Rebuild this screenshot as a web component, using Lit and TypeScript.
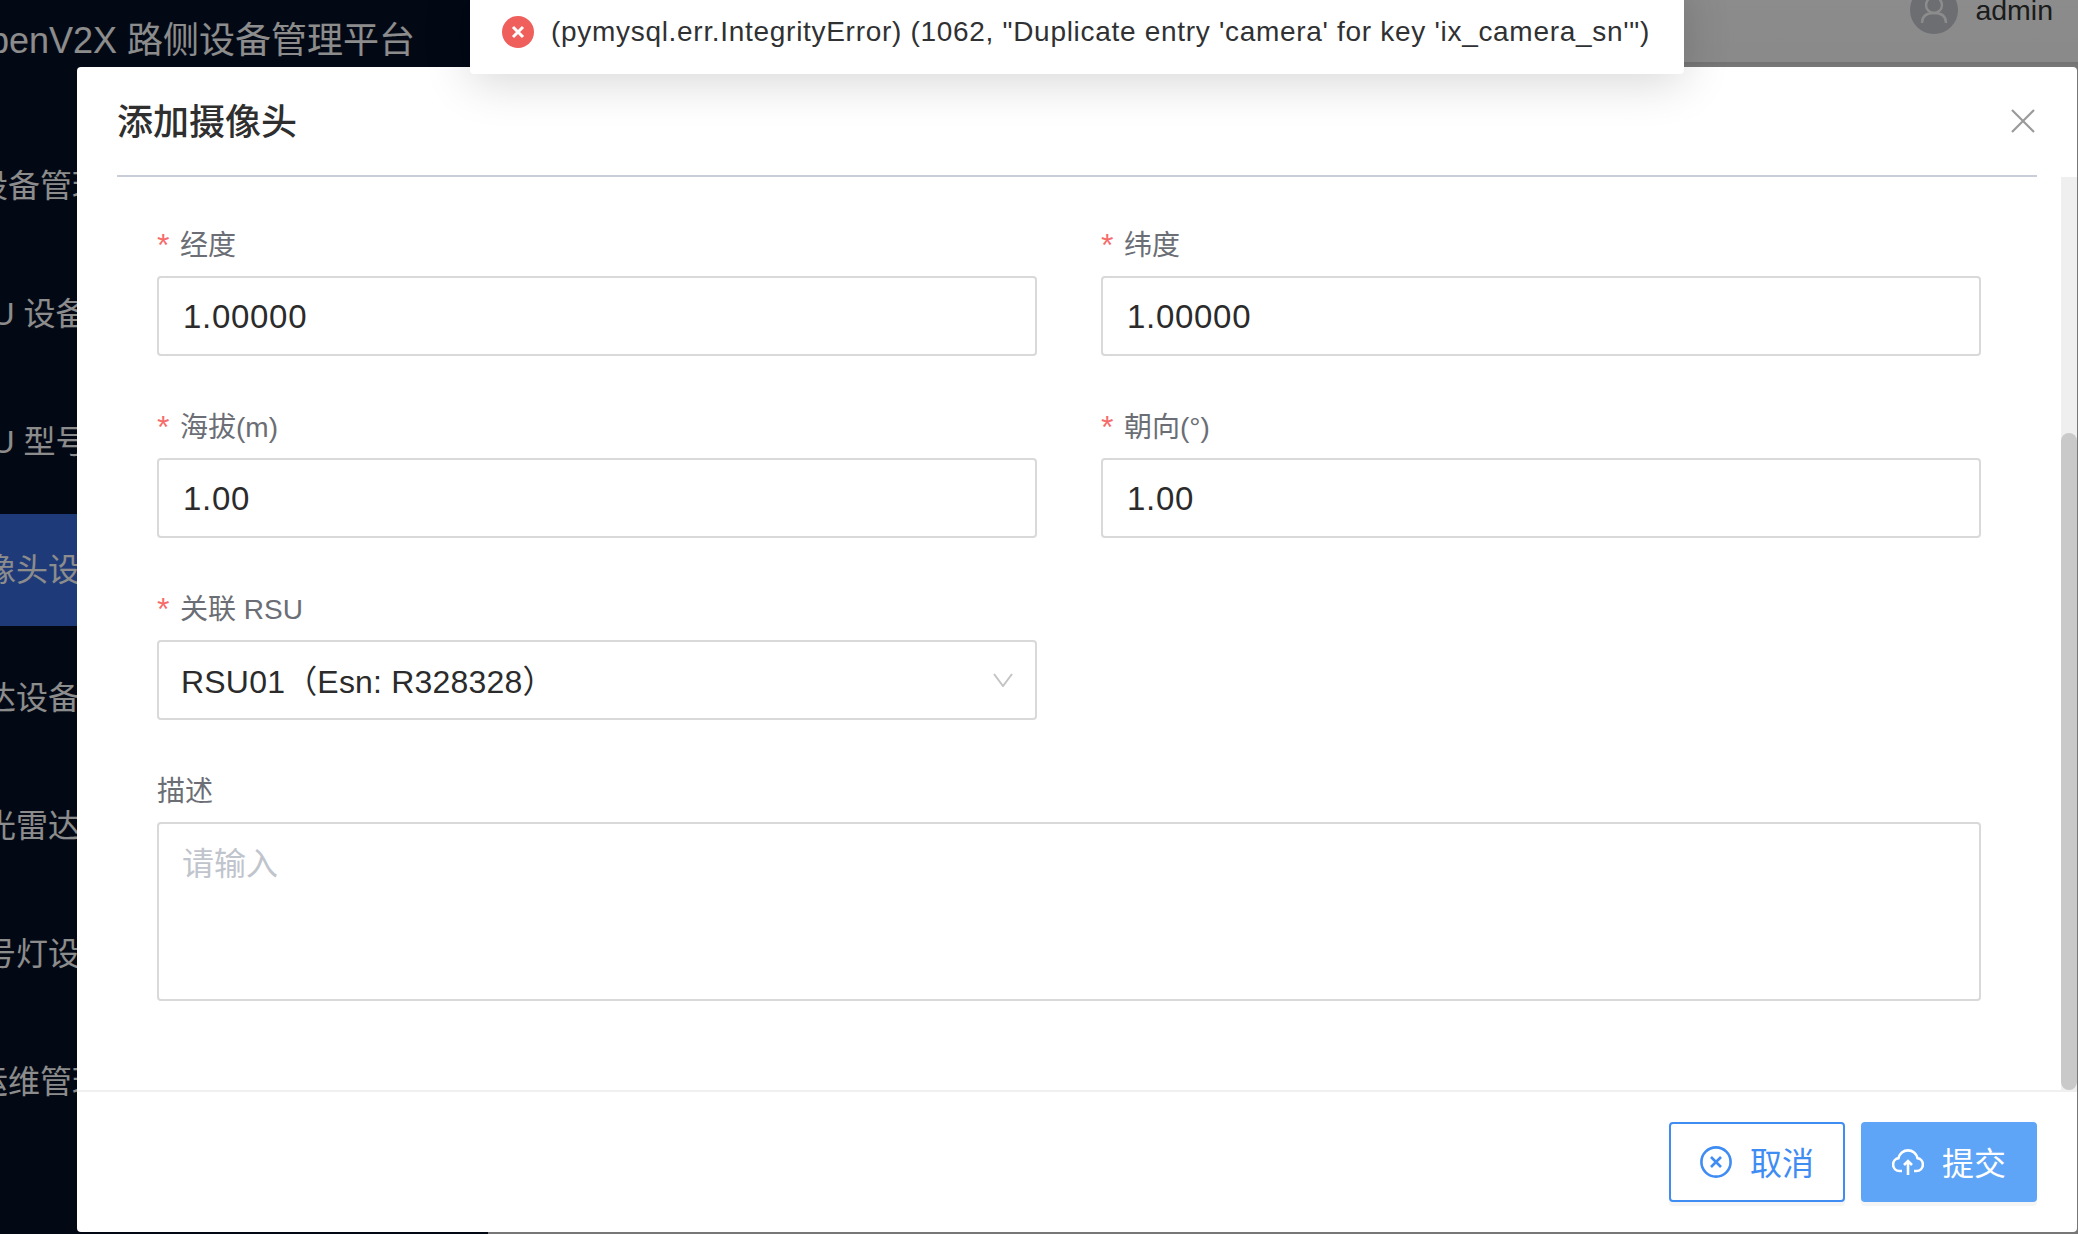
import { LitElement, html, css } from "lit";
import { customElement } from "lit/decorators.js";

const NAV = [
  { t: "设备管理", cls: "top" },
  { t: "RSU 设备管理", cls: "sub rsu" },
  { t: "RSU 型号管理", cls: "sub rsu" },
  { t: "摄像头设备管理", cls: "sub active" },
  { t: "雷达设备管理", cls: "sub" },
  { t: "激光雷达设备管理", cls: "sub" },
  { t: "信号灯设备管理", cls: "sub" },
  { t: "运维管理", cls: "top" },
];

@customElement("app-root")
export class AppRoot extends LitElement {
  static styles = css`
    :host {
      display: block;
      position: relative;
      width: 100vw;
      height: 100vh;
      overflow: hidden;
      font-family: "Liberation Sans", "Noto Sans CJK SC", sans-serif;
    }
    .page { display: flex; height: 100%; background: #d9d9d9; }
    .sidebar { width: 488px; flex: none; background: #041026; color: #fff; overflow: hidden; display: flex; flex-direction: column; }
    .brand { font-size: 36px; line-height: 80px; height: 80px; box-sizing: border-box; padding-top: 1px; margin-left: -39px; white-space: nowrap; }
    .nav { display: flex; flex-direction: column; gap: 16px; margin-top: 50px; }
    .item { height: 112px; box-sizing: border-box; padding-bottom: 7px; display: flex; align-items: center; font-size: 32px; white-space: nowrap; }
    .item.top span { margin-left: -24px; }
    .item.sub span { margin-left: -48px; }
    .item.rsu span { margin-left: -53px; }
    .item.active { background: #386ada; }
    .main { flex: 1; display: flex; flex-direction: column; min-width: 0; }
    .header { height: 62px; background: linear-gradient(#fff, #fbfbfb); display: flex; justify-content: flex-end; align-items: flex-start; padding-right: 25px; gap: 17px; box-shadow: 0 2px 2px rgba(0,0,0,.03); }
    .avatar { width: 48px; height: 48px; border-radius: 50%; background: #c5c8ce; margin-top: -14px; flex: none; }
    .avatar svg { display: block; }
    .admin { font-size: 28.5px; line-height: 28px; margin-top: -4px; color: #333; }
    .overlay { position: absolute; inset: 0; background: rgba(0,0,0,.45); }
    .dialog { position: absolute; left: 77px; top: 67px; width: 2000px; height: 1165px; background: #fff; border-radius: 4px; display: flex; flex-direction: column; overflow: hidden; }
    .dlg-head { height: 108px; margin: 0 40px; border-bottom: 2px solid #c9ccd9; display: flex; align-items: center; justify-content: space-between; flex: none; }
    .dlg-title { font-size: 36px; font-weight: 500; color: #2f2f2f; line-height: 48px; margin-top: 4px; }
    .close { margin-right: 2px; display: block; }
    .dlg-body { flex: 1; display: flex; min-height: 0; }
    .form { flex: 1; padding: 39px 80px 0; display: grid; grid-template-columns: 880px 880px; column-gap: 64px; grid-auto-rows: min-content; row-gap: 42px; }
    .field { display: flex; flex-direction: column; }
    .field.wide { grid-column: 1 / 3; }
    .label { height: 60px; line-height: 59px; font-size: 28px; color: #6b6e75; display: flex; white-space: pre; }
    .star { color: #f56c6c; width: 23px; flex: none; font-size: 32px; line-height: 58px; box-sizing: border-box; }
    input, .select, textarea {
      box-sizing: border-box; width: 100%; border: 2px solid #d9d9d9; border-radius: 4px; background: #fff;
      font-family: inherit; font-size: 32px; color: #2b2b2b; outline: none; margin: 0;
    }
    input { height: 80px; padding: 2px 24px 0; font-size: 33px; letter-spacing: .7px; }
    .select { height: 80px; padding: 0 22px 0 22px; display: flex; align-items: center; justify-content: space-between; letter-spacing: .2px; }
    .select span { margin-top: -3px; }
    textarea { height: 179px; padding: 20px 23px; resize: none; display: block; line-height: 40px; }
    textarea::placeholder { color: #c0c4cc; opacity: 1; }
    .track { width: 16px; flex: none; background: #efefef; display: flex; flex-direction: column; justify-content: flex-end; }
    .thumb { height: 657px; background: #c9c9c9; border-radius: 8px; }
    .dlg-foot { flex: none; border-top: 2px solid #f0f0f0; height: 142px; box-sizing: border-box; padding: 30px 40px 0; display: flex; justify-content: flex-end; gap: 16px; }
    .btn { width: 176px; height: 80px; box-sizing: border-box; border-radius: 4px; display: flex; align-items: center; justify-content: center; gap: 18px; font-size: 32px; box-shadow: 0 4px 0 rgba(0,0,0,.04); }
    .btn svg { display: block; flex: none; }
    .btn span { margin-top: -2px; }
    .btn.plain { border: 2px solid #3f8cf3; color: #3f8cf3; background: #fff; }
    .btn.primary { background: #5ea4f7; color: #fff; }
    .toast { position: absolute; left: 470px; top: -20px; width: 1214px; height: 94px; box-sizing: border-box; background: #fff; border-radius: 4px; box-shadow: 0 8px 48px rgba(0,0,0,.16); display: flex; align-items: center; padding: 10px 0 0 32px; gap: 17px; color: #303133; font-size: 28px; letter-spacing: .7px; white-space: nowrap; }
    .toast svg { display: block; flex: none; }
  `;

  render() {
    return html`
      <div class="page">
        <aside class="sidebar">
          <div class="brand">OpenV2X 路侧设备管理平台</div>
          <nav class="nav">
            ${NAV.map((n) => html`<div class="item ${n.cls}"><span>${n.t}</span></div>`)}
          </nav>
        </aside>
        <div class="main">
          <header class="header">
            <div class="avatar">
              <svg width="48" height="48" viewBox="0 0 48 48" fill="none" stroke="#fff" stroke-width="2.4">
                <circle cx="24" cy="19" r="8"></circle>
                <path d="M12 37C12 29 18 27 24 27C30 27 36 29 36 37"></path>
              </svg>
            </div>
            <div class="admin">admin</div>
          </header>
        </div>
      </div>
      <div class="overlay"></div>
      <section class="dialog">
        <div class="dlg-head">
          <div class="dlg-title">添加摄像头</div>
          <svg class="close" width="24" height="24" viewBox="0 0 24 24" stroke="#9a9a9a" stroke-width="2.2" fill="none">
            <path d="M1 1L23 23M23 1L1 23"></path>
          </svg>
        </div>
        <div class="dlg-body">
          <form class="form">
            <div class="field"><div class="label"><span class="star">*</span>经度</div><input .value=${"1.00000"} /></div>
            <div class="field"><div class="label"><span class="star">*</span>纬度</div><input .value=${"1.00000"} /></div>
            <div class="field"><div class="label"><span class="star">*</span>海拔(m)</div><input .value=${"1.00"} /></div>
            <div class="field"><div class="label"><span class="star">*</span>朝向(°)</div><input .value=${"1.00"} /></div>
            <div class="field">
              <div class="label"><span class="star">*</span>关联 RSU</div>
              <div class="select">
                <span>RSU01（Esn: R328328）</span>
                <svg width="20" height="14" viewBox="0 0 20 14" fill="none" stroke="#c4c4c4" stroke-width="2"><path d="M1 1L10 13L19 1"></path></svg>
              </div>
            </div>
            <div></div>
            <div class="field wide"><div class="label">描述</div><textarea placeholder="请输入"></textarea></div>
          </form>
          <div class="track"><div class="thumb"></div></div>
        </div>
        <div class="dlg-foot">
          <div class="btn plain">
            <svg width="32" height="32" viewBox="0 0 32 32" fill="none" stroke="currentColor" stroke-width="2.6">
              <circle cx="16" cy="16" r="14.6"></circle>
              <path d="M11 11L21 21M21 11L11 21"></path>
            </svg>
            <span>取消</span>
          </div>
          <div class="btn primary">
            <svg width="32" height="32" viewBox="0 0 32 32" fill="none" stroke="currentColor" stroke-width="2.6">
              <path d="M10 25H7.5a6.5 6.5 0 0 1-1-12.9A9.7 9.7 0 0 1 25.5 12.1a6.5 6.5 0 0 1-1 12.9H22"></path>
              <path d="M16 29V15M12 19l4-4 4 4"></path>
            </svg>
            <span>提交</span>
          </div>
        </div>
      </section>
      <div class="toast">
        <svg width="32" height="32" viewBox="0 0 32 32">
          <circle cx="16" cy="16" r="16" fill="#ef5f5c"></circle>
          <path d="M11 11L21 21M21 11L11 21" stroke="#fff" stroke-width="3" fill="none"></path>
        </svg>
        <span>(pymysql.err.IntegrityError) (1062, "Duplicate entry 'camera' for key 'ix_camera_sn'")</span>
      </div>
    `;
  }
}
